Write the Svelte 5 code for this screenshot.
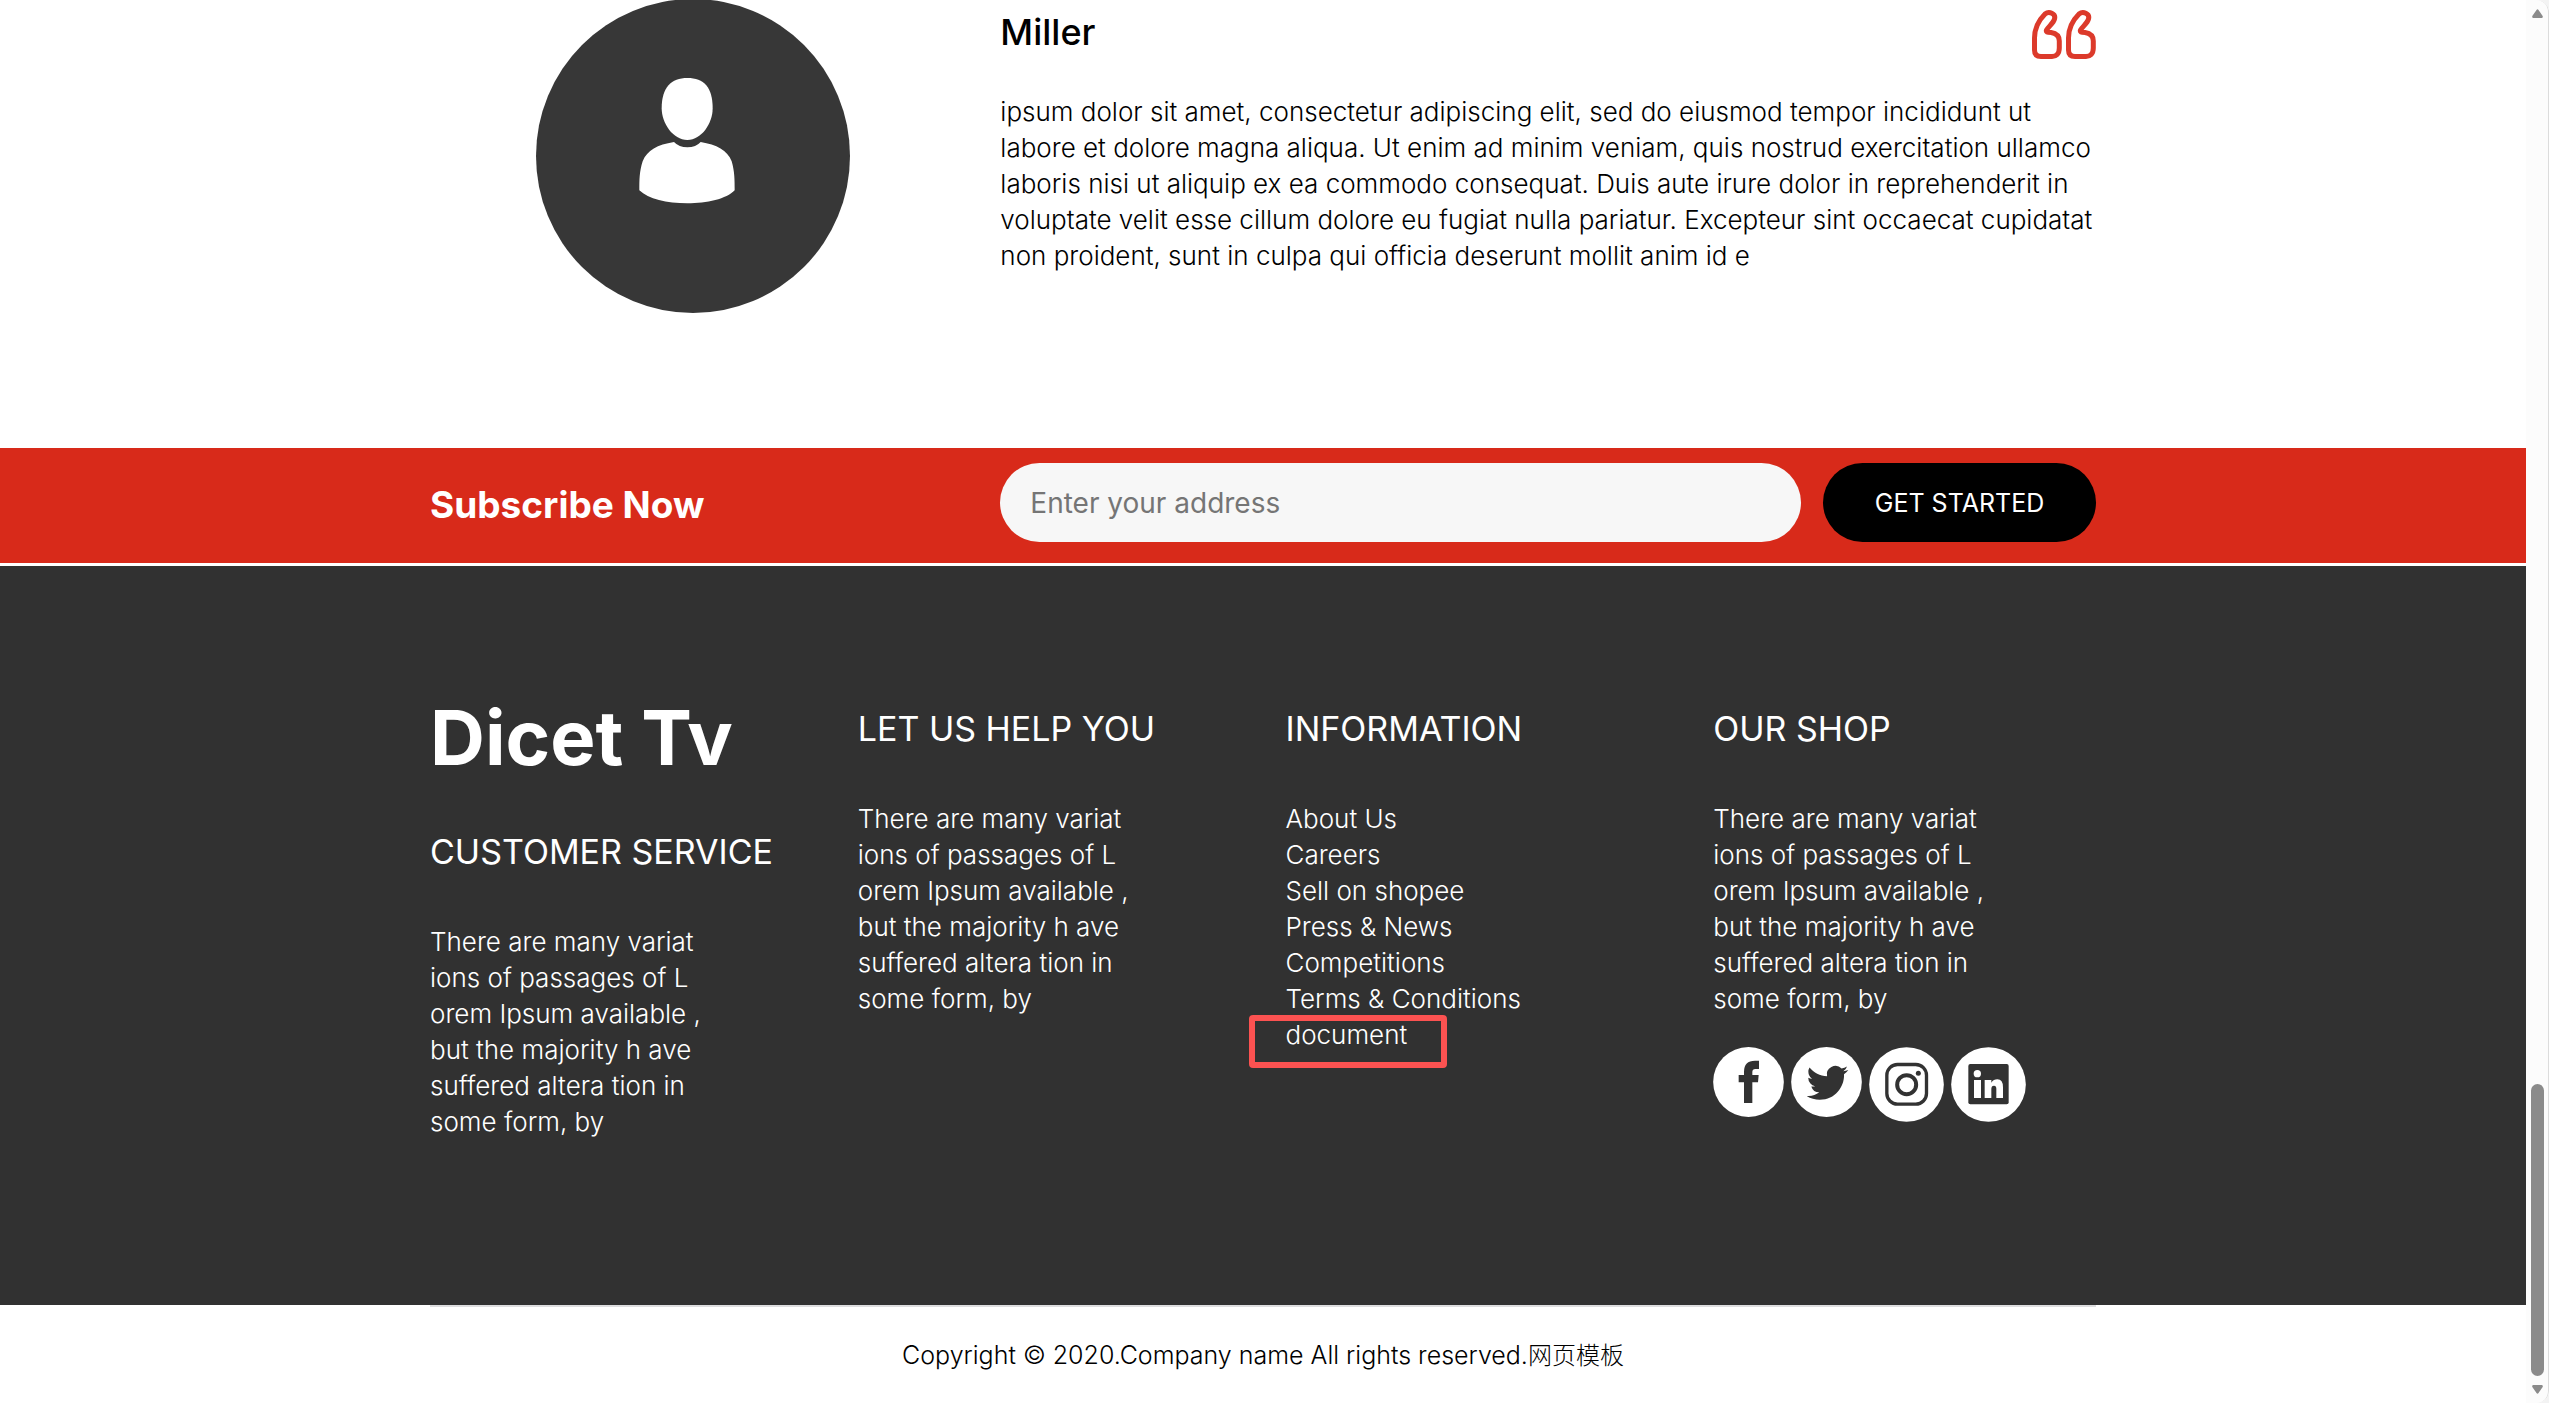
<script>
  const blurb = [
    'There are many variat',
    'ions of passages of L',
    'orem Ipsum available ,',
    'but the majority h ave',
    'suffered altera tion in',
    'some form, by'
  ];
  const quote = [
    'ipsum dolor sit amet, consectetur adipiscing elit, sed do eiusmod tempor incididunt ut',
    'labore et dolore magna aliqua. Ut enim ad minim veniam, quis nostrud exercitation ullamco',
    'laboris nisi ut aliquip ex ea commodo consequat. Duis aute irure dolor in reprehenderit in',
    'voluptate velit esse cillum dolore eu fugiat nulla pariatur. Excepteur sint occaecat cupidatat',
    'non proident, sunt in culpa qui officia deserunt mollit anim id e'
  ];
  const links = ['About Us', 'Careers', 'Sell on shopee', 'Press & News', 'Competitions', 'Terms & Conditions'];
</script>

{#snippet lines(items)}
  <p class="lines">
    {#each items as line}<span>{line}</span>{/each}
  </p>
{/snippet}

<div class="window">
  <div class="page">
    <section class="testimonial">
      <div class="container twelve">
        <div class="avatar">
          <svg viewBox="108 0 942 939" width="314" height="313" role="img" aria-label="Miller">
            <circle cx="579" cy="468" r="471" fill="#373737" />
            <path fill="#fff" d="M562 234C612 234 638 262 638 325C638 370 605 420 562 420C519 420 485 370 485 325C485 262 514 234 562 234Z" />
            <path fill="#fff" d="M522 426Q537 442 562 442Q588 442 602 426C650 434 682 450 695 484C704 515 704 540 704 571C680 597 620 610 562 610C500 610 445 597 418 571C418 540 418 515 428 484C442 450 472 434 522 426Z" />
          </svg>
        </div>
        <div class="words">
          <div class="name-row">
            <h3>Miller</h3>
            <svg viewBox="0 0 64 49" width="64" height="49" fill="none" stroke="#dc3a2b" stroke-width="5" stroke-linejoin="round" aria-hidden="true">
              <path id="mark" d="M2.500 40V28C2.500 17 8 9 13 4C17 .8 24 3.500 22.500 9C21.500 13 17 16 14.500 20C13.800 22 15 22.500 19 22.500C25 23.500 27.300 27 27.300 31V38C27.300 44 24 46.500 20 46.500H9C4.500 46.500 2.500 44 2.500 40Z" />
              <use href="#mark" x="34" />
            </svg>
          </div>
          {@render lines(quote)}
        </div>
      </div>
    </section>

    <section class="subscribe">
      <div class="container twelve">
        <h2>Subscribe Now</h2>
        <form onsubmit={(e) => e.preventDefault()}>
          <input type="text" placeholder="Enter your address" aria-label="Enter your address" />
          <button type="submit">GET STARTED</button>
        </form>
      </div>
    </section>

    <footer>
      <div class="container four">
        <div>
          <div class="logo">Dicet Tv</div>
          <h3>CUSTOMER SERVICE</h3>
          {@render lines(blurb)}
        </div>
        <div>
          <h3>LET US HELP YOU</h3>
          {@render lines(blurb)}
        </div>
        <div>
          <h3>INFORMATION</h3>
          <ul>
            {#each links as link}
              <li><a href="#info">{link}</a></li>
            {/each}
            <li class="marked"><a href="#document">document</a></li>
          </ul>
        </div>
        <div>
          <h3>OUR SHOP</h3>
          {@render lines(blurb)}
          <div class="social">
            <a href="#facebook" aria-label="Facebook">
              <svg viewBox="69 81 213 210" width="71" height="70">
                <ellipse cx="175.500" cy="186" rx="106" ry="105" fill="#fff" />
                <path fill="#323232" d="M207 122V147H196Q187 147 187 156V165H206L204 187H187V249H162V187H146V165H162V155Q162 122 195 122Z" />
              </svg>
            </a>
            <a href="#twitter" aria-label="Twitter">
              <svg viewBox="303 81 213 210" width="71" height="70">
                <ellipse cx="409.500" cy="186" rx="106" ry="105" fill="#fff" />
                <path fill="#323232" transform="translate(350 126) scale(5.2)" d="M23.953 4.570a10 10 0 01-2.825.775 4.958 4.958 0 002.163-2.723c-.951.555-2.005.959-3.127 1.184a4.920 4.920 0 00-8.384 4.482C7.690 8.095 4.067 6.130 1.640 3.162a4.822 4.822 0 00-.666 2.475c0 1.710.870 3.213 2.188 4.096a4.904 4.904 0 01-2.228-.616v.060a4.923 4.923 0 003.946 4.827 4.996 4.996 0 01-2.212.085 4.936 4.936 0 004.604 3.417 9.867 9.867 0 01-6.102 2.105c-.390 0-.779-.023-1.170-.067a13.995 13.995 0 007.557 2.209c9.053 0 13.998-7.496 13.998-13.985 0-.210 0-.420-.015-.630A9.935 9.935 0 0024 4.590z" />
              </svg>
            </a>
            <a href="#instagram" aria-label="Instagram">
              <svg viewBox="537 81 225 225" width="75" height="75" fill="none" stroke="#323232">
                <circle cx="649.500" cy="193.500" r="112" fill="#fff" stroke="none" />
                <rect x="590.500" y="133.500" width="119" height="119" rx="32" stroke-width="10" />
                <circle cx="650" cy="194" r="28.500" stroke-width="12" />
                <circle cx="685" cy="160" r="7.500" fill="#323232" stroke="none" />
              </svg>
            </a>
            <a href="#linkedin" aria-label="LinkedIn">
              <svg viewBox="786 81 225 225" width="75" height="75">
                <circle cx="898.500" cy="193.500" r="112" fill="#fff" />
                <rect x="838" y="132" width="121" height="121" rx="6" fill="#323232" />
                <circle cx="865" cy="161" r="11" fill="#fff" />
                <path fill="#fff" d="M855 180h21v54h-21zM887 180h20v8q7-10 18-10q17 0 17 24V234h-20V206q0-9-7-9q-8 0-8 10V234h-20z" />
              </svg>
            </a>
          </div>
        </div>
      </div>
    </footer>

    <div class="container">
      <p class="copyright">Copyright © 2020.Company name All rights reserved.<span>网页模板</span></p>
    </div>
  </div>

  <div class="scrollbar" aria-hidden="true">
    <svg viewBox="0 0 11 9" width="11" height="9"><path d="M4.500 1Q5.500-.5 6.500 1L10.700 7Q11.200 9 9.500 9H1.500Q-.2 9 .3 7Z" /></svg>
    <div class="thumb"></div>
    <svg viewBox="0 0 11 9" width="11" height="9"><path d="M4.500 8Q5.500 9.500 6.500 8L10.700 2Q11.200 0 9.500 0H1.500Q-.2 0 .3 2Z" /></svg>
  </div>
</div>

<style>
  :global(body) {
    margin: 0;
    background: #f3f3f3;
  }
  .window {
    display: flex;
    overflow: hidden;
    border-radius: 0 12px 12px 0;
    background: #fff;
    font: 300 26px/36px Inter, "Noto Sans CJK SC", sans-serif;
    color: #000;
  }
  .page {
    flex: 1;
    min-width: 0;
  }
  .container {
    max-width: 1666px;
    margin: 0 auto;
    padding: 0 22px;
  }
  .twelve {
    display: grid;
    grid-template-columns: repeat(12, 1fr);
    column-gap: 45px;
  }
  h2,
  h3,
  p,
  ul {
    margin: 0;
    padding: 0;
  }
  h3 {
    font-size: 34px;
    line-height: 54px;
    font-weight: 400;
  }
  .lines span {
    display: block;
    white-space: nowrap;
  }

  .testimonial {
    padding-bottom: 135px;
  }
  .avatar {
    grid-column: span 4;
    display: flex;
    justify-content: center;
  }
  .avatar svg {
    display: block;
  }
  .words {
    grid-column: span 8;
    padding-top: 5px;
  }
  .words h3 {
    font-size: 36px;
    font-weight: 500;
  }
  .name-row {
    display: flex;
    justify-content: space-between;
    align-items: flex-end;
    margin-bottom: 35px;
  }

  .subscribe {
    padding: 15px 0 21px;
    border-bottom: 3px solid #fff;
    background: #d82a1a;
  }
  .subscribe .container {
    align-items: center;
  }
  h2 {
    grid-column: span 4;
    padding-top: 4px;
    color: #fff;
    font-size: 37px;
    line-height: 54px;
    font-weight: 700;
  }
  form {
    grid-column: span 8;
    display: flex;
    gap: 22px;
  }
  input,
  button {
    box-sizing: border-box;
    height: 79px;
    border: 0;
    border-radius: 40px;
    font: 400 28px/40px Inter, sans-serif;
  }
  input {
    flex: 1;
    min-width: 0;
    padding: 0 30px;
    background: #f7f7f7;
  }
  input::placeholder {
    color: #757575;
    opacity: 1;
  }
  button {
    width: 273px;
    padding: 0;
    background: #000;
    color: #fff;
    font-size: 25px;
  }

  footer {
    padding: 136px 0 165px;
    background: #313131;
    color: #fff;
  }
  .four {
    display: grid;
    grid-template-columns: repeat(4, minmax(0, 1fr));
    column-gap: 45px;
  }
  .four h3 {
    margin-bottom: 45px;
    white-space: nowrap;
  }
  .logo {
    margin-bottom: 53px;
    font-size: 76px;
    line-height: 70px;
    font-weight: 700;
    white-space: nowrap;
  }
  ul {
    list-style: none;
  }
  a {
    color: inherit;
    text-decoration: none;
  }
  .marked {
    position: relative;
  }
  .marked::after {
    content: "";
    position: absolute;
    top: -2px;
    left: -37px;
    width: 186px;
    height: 41px;
    border: 6px solid #fc5251;
    border-radius: 4px;
    pointer-events: none;
  }
  .social {
    display: flex;
    gap: 7px;
    margin-top: 30px;
  }
  .social a,
  .social svg {
    display: block;
    flex: none;
  }

  .copyright {
    padding: 30px 0;
    border-top: 2px solid #dddddf;
    font-size: 25px;
    text-align: center;
  }
  .copyright span {
    font-size: 24px;
    line-height: 24px;
  }

  .scrollbar {
    box-sizing: border-box;
    width: 23px;
    padding: 9px 0;
    display: flex;
    flex-direction: column;
    align-items: center;
    border-right: 1px solid #dcdcdc;
    border-radius: 0 12px 12px 0;
    background: #fcfcfc;
  }
  .scrollbar svg {
    display: block;
    fill: #8b8b8b;
  }
  .thumb {
    width: 13px;
    height: 292px;
    margin: auto 0 9px;
    border-radius: 7px;
    background: #8b8b8b;
  }
</style>
